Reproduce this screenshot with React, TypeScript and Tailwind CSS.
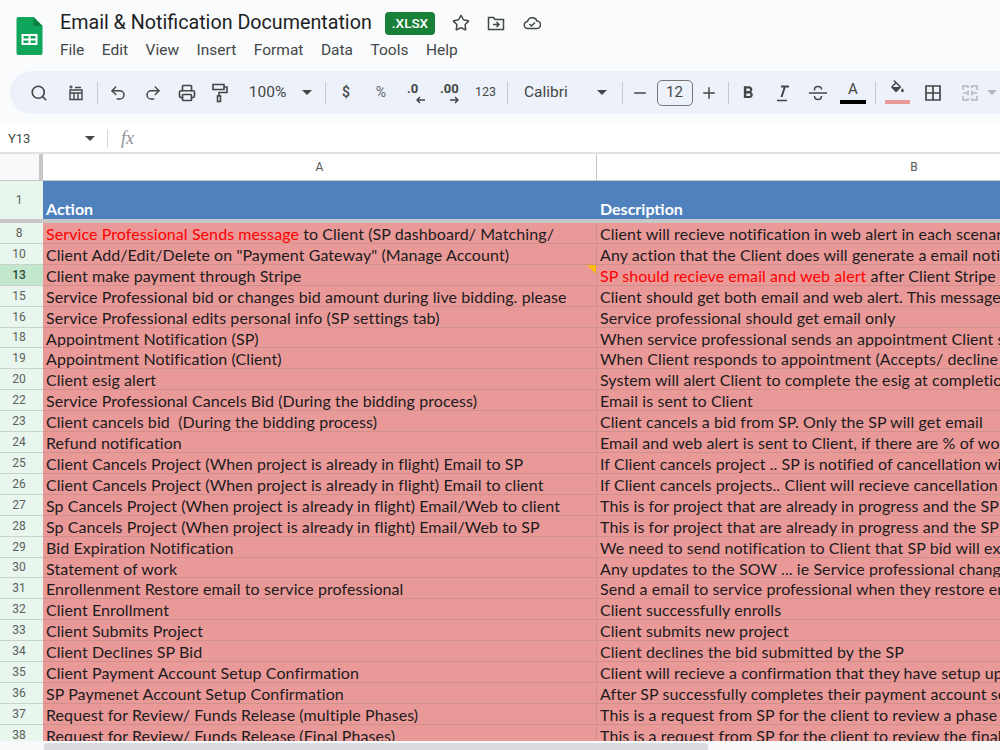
import { ReactNode } from 'react';
import { Star, Search, Undo2, Redo2, Printer, Minus, Plus } from 'lucide-react';

const MENU = ['File', 'Edit', 'View', 'Insert', 'Format', 'Data', 'Tools', 'Help'];

// rowNum, action, description; red prefix is split out where the sheet has it
const ROWS: { n: number; aRed?: string; a: string; bRed?: string; b: string; active?: boolean }[] = [
  { n: 8, aRed: 'Service Professional Sends message', a: ' to Client (SP dashboard/ Matching/', b: 'Client will recieve notification in web alert in each scenario' },
  { n: 10, a: 'Client Add/Edit/Delete on "Payment Gateway" (Manage Account)', b: 'Any action that the Client does will generate a email notification' },
  { n: 13, a: 'Client make payment through Stripe', bRed: 'SP should recieve email and web alert', b: ' after Client Stripe payment', active: true },
  { n: 15, a: 'Service Professional bid or changes bid amount during live bidding. please', b: 'Client should get both email and web alert. This message' },
  { n: 16, a: 'Service Professional edits personal info (SP settings tab)', b: 'Service professional should get email only' },
  { n: 18, a: 'Appointment Notification (SP)', b: 'When service professional sends an appointment Client should' },
  { n: 19, a: 'Appointment Notification (Client)', b: 'When Client responds to appointment (Accepts/ decline' },
  { n: 20, a: 'Client esig alert', b: 'System will alert Client to complete the esig at completion' },
  { n: 22, a: 'Service Professional Cancels Bid (During the bidding process)', b: 'Email is sent to Client' },
  { n: 23, a: 'Client cancels bid  (During the bidding process)', b: 'Client cancels a bid from SP. Only the SP will get email' },
  { n: 24, a: 'Refund notification', b: 'Email and web alert is sent to Client, if there are % of work' },
  { n: 25, a: 'Client Cancels Project (When project is already in flight) Email to SP', b: 'If Client cancels project .. SP is notified of cancellation with' },
  { n: 26, a: 'Client Cancels Project (When project is already in flight) Email to client', b: 'If Client cancels projects.. Client will recieve cancellation' },
  { n: 27, a: 'Sp Cancels Project (When project is already in flight) Email/Web to client', b: 'This is for project that are already in progress and the SP' },
  { n: 28, a: 'Sp Cancels Project (When project is already in flight) Email/Web to SP', b: 'This is for project that are already in progress and the SP' },
  { n: 29, a: 'Bid Expiration Notification', b: 'We need to send notification to Client that SP bid will expire' },
  { n: 30, a: 'Statement of work', b: 'Any updates to the SOW ... ie Service professional changes' },
  { n: 31, a: 'Enrollenment Restore email to service professional', b: 'Send a email to service professional when they restore enrollment' },
  { n: 32, a: 'Client Enrollment', b: 'Client successfully enrolls' },
  { n: 33, a: 'Client Submits Project', b: 'Client submits new project' },
  { n: 34, a: 'Client Declines SP Bid', b: 'Client declines the bid submitted by the SP' },
  { n: 35, a: 'Client Payment Account Setup Confirmation', b: 'Client will recieve a confirmation that they have setup up' },
  { n: 36, a: 'SP Paymenet Account Setup Confirmation', b: 'After SP successfully completes their payment account setup' },
  { n: 37, a: 'Request for Review/ Funds Release (multiple Phases)', b: 'This is a request from SP for the client to review a phase' },
  { n: 38, a: 'Request for Review/ Funds Release (Final Phases)', b: 'This is a request from SP for the client to review the final' },
];

function Divider() {
  return <div className="w-px h-[22px] bg-[#c7c9ce]" />;
}

function Arrow({ color = '#444746' }: { color?: string }) {
  return (
    <svg width="10" height="5" viewBox="0 0 10 5"><path d="M0 0h10L5 5z" fill={color} /></svg>
  );
}

// toolbar cell: fixed width, content centered
function Slot({ w, children }: { w: string; children?: ReactNode }) {
  return <div className={`${w} h-full shrink-0 flex items-center justify-center`}>{children}</div>;
}

function SheetsLogo() {
  return (
    <svg width="27" height="38" viewBox="0 0 26 38" className="shrink-0">
      <path d="M2 0h15l9 9v27a2 2 0 0 1-2 2H2a2 2 0 0 1-2-2V2a2 2 0 0 1 2-2z" fill="#0fa55a" />
      <path d="M17 0l9 9h-9z" fill="#0b8043" />
      <path d="M5 17h16v11H5z M7 19v2.500h5V19z M14 19v2.500h5V19z M7 23.500V26h5v-2.500z M14 23.500V26h5v-2.500z" fill="#fff" fillRule="evenodd" />
    </svg>
  );
}

function Toolbar() {
  const ic = 'w-[18px] h-[18px] text-[#444746] shrink-0';
  return (
    <div className="ml-[10px] h-[43px] mt-px bg-[#edf2fa] rounded-l-[22px] flex items-center pl-[10px] whitespace-nowrap overflow-hidden text-[#444746]" style={{ fontFamily: 'Roboto, sans-serif' }}>
      <Slot w="w-[37px]"><Search className={ic} strokeWidth={2.2} /></Slot>
      <Slot w="w-[38px]">
        <svg width="18" height="18" viewBox="0 0 18 18" fill="none" stroke="#444746" strokeWidth="1.400">
          <path d="M3 6h12v9.500H3zM3 9h12M7 9v6.500M11 9v6.500M4 1.500v3M2.500 3h3M8 3.500h6" />
        </svg>
      </Slot>
      <Slot w="w-[5px]"><Divider /></Slot>
      <Slot w="w-[36px]"><Undo2 className={ic} /></Slot>
      <Slot w="w-[33px]"><Redo2 className={ic} /></Slot>
      <Slot w="w-[36px]"><Printer className={ic} strokeWidth={2.200} /></Slot>
      <Slot w="w-[30px]">
        <svg width="18" height="20" viewBox="0 0 18 20" fill="none" stroke="#444746" strokeWidth="1.600">
          <path d="M2 1.500h11v5H2zM13 4h3v5.500H8V13" />
          <rect x="6.500" y="13" width="3" height="5.500" />
        </svg>
      </Slot>
      <Slot w="w-[65px]"><span className="text-[15.500px]">100%</span></Slot>
      <Slot w="w-[14px]"><Arrow /></Slot>
      <Slot w="w-[22px]"><Divider /></Slot>
      <Slot w="w-[20px]"><span className="text-[14px] font-medium">$</span></Slot>
      <Slot w="w-[50px]"><span className="text-[14px] text-[#5f6368]">%</span></Slot>
      <Slot w="w-[19px]">
        <span className="relative w-[19px] h-[24px] font-bold">
          <span className="absolute left-[1px] top-[1px] text-[13px] leading-[14px]">.0</span>
          <svg className="absolute right-0 bottom-[1px]" width="9" height="8" viewBox="0 0 9 8" fill="none" stroke="#444746" strokeWidth="1.500"><path d="M9 4H1M4 1L1 4l3 3" /></svg>
        </span>
      </Slot>
      <Slot w="w-[50px]">
        <span className="relative w-[20px] h-[24px] font-bold">
          <span className="absolute left-0 top-[1px] text-[13px] leading-[14px]">.00</span>
          <svg className="absolute right-[1px] bottom-[1px]" width="9" height="8" viewBox="0 0 9 8" fill="none" stroke="#444746" strokeWidth="1.500"><path d="M0 4h8M5 1l3 3-3 3" /></svg>
        </span>
      </Slot>
      <Slot w="w-[21px]"><span className="text-[12.500px]">123</span></Slot>
      <Slot w="w-[22px]"><Divider /></Slot>
      <div className="w-[73px] pl-[6px] shrink-0 text-[15.500px]">Calibri</div>
      <Slot w="w-[22px]"><Arrow /></Slot>
      <Slot w="w-[18px]"><Divider /></Slot>
      <Slot w="w-[18px]"><Minus className={ic} /></Slot>
      <Slot w="w-[51px]">
        <div className="w-[36px] h-[26px] border border-[#747775] rounded-[5px] flex items-center justify-center text-[15px]">12</div>
      </Slot>
      <Slot w="w-[18px]"><Plus className={ic} /></Slot>
      <Slot w="w-[20px]"><Divider /></Slot>
      <Slot w="w-[20px]">
        <svg width="20" height="20" viewBox="0 0 24 24" fill="#444746">
          <path d="M15.600 10.790c.97-.67 1.650-1.770 1.650-2.790 0-2.260-1.750-4-4-4H7v14h7.040c2.090 0 3.710-1.700 3.710-3.790 0-1.520-.86-2.820-2.150-3.420zM10 6.500h3c.83 0 1.500.67 1.500 1.500s-.67 1.500-1.500 1.500h-3v-3zm3.500 9H10v-3h3.500c.83 0 1.500.67 1.500 1.500s-.67 1.500-1.500 1.500z" />
        </svg>
      </Slot>
      <Slot w="w-[50px]">
        <svg width="18" height="20" viewBox="0 0 18 20" fill="none" stroke="#444746" strokeWidth="2">
          <path d="M7 3.500h8M11 3.500L7.500 14" />
          <path d="M3 17.500h10" strokeWidth="1.600" />
        </svg>
      </Slot>
      <Slot w="w-[20px]">
        <svg width="18" height="18" viewBox="0 0 18 18" fill="none" stroke="#444746" strokeWidth="1.500">
          <path d="M0 9h18M5.500 6.500V5.500C5.500 3.500 7 2.500 9 2.500s3.500 1 3.500 3M5.500 12c0 2 1.500 3.500 3.500 3.500s3.500-1.500 3.500-3.500" />
        </svg>
      </Slot>
      <div className="ml-[12px] -mt-[5px] w-[26px] h-[28px] flex flex-col items-center justify-end shrink-0">
        <span className="text-[15px] leading-none">A</span>
        <div className="w-[26px] h-[4.500px] bg-black mt-[3px]" />
      </div>
      <Slot w="w-[19px]"><Divider /></Slot>
      <div className="-mt-[5px] w-[25px] h-[28px] flex flex-col items-center justify-end shrink-0">
        <svg width="17" height="17" viewBox="0 0 24 24" fill="#444746" fillRule="evenodd">
          <path d="M16.560 8.940L7.620 0 6.210 1.410l2.380 2.380-5.150 5.150c-.59.59-.59 1.540 0 2.120l5.500 5.500c.29.29.68.44 1.060.44s.77-.15 1.060-.44l5.500-5.500c.59-.58.59-1.530 0-2.120zM5.210 10L10 5.210 14.790 10H5.210zM19 11.500s-2 2.170-2 3.500c0 1.100.9 2 2 2s2-.9 2-2c0-1.330-2-3.500-2-3.500z" />
        </svg>
        <div className="w-[25px] h-[4px] bg-[#ea9999] mt-[3px]" />
      </div>
      <Slot w="w-[46px]">
        <svg width="16" height="16" viewBox="0 0 16 16" fill="none" stroke="#444746" strokeWidth="1.700">
          <path d="M1 1h14v14H1zM8 1v14M1 8h14" />
        </svg>
      </Slot>
      <Slot w="w-[28px]">
        <svg width="18" height="18" viewBox="0 0 18 18" fill="none" stroke="#b4b7bc" strokeWidth="1.500">
          <path d="M2 6V2h5v2M16 6V2h-5v2M2 12v4h5v-2M16 12v4h-5v-2M2 9h5M11 9h5M7 6.500v5M11 6.500v5" />
        </svg>
      </Slot>
      <Slot w="w-[16px]"><Arrow color="#b4b7bc" /></Slot>
    </div>
  );
}

function SheetRow({ row }: { row: (typeof ROWS)[number] }) {
  return (
    <div className="flex h-[20.920px] shrink-0">
      <div className={`w-[43px] shrink-0 flex items-center justify-center pr-[5px] text-[12px] border-b border-[#c7d4cc] ${row.active ? 'bg-[#c3e7cd] font-medium text-[#2c4a35]' : 'bg-[#e8f6ed] text-[#5a5f5c]'}`} style={{ fontFamily: 'Roboto, sans-serif' }}>
        {row.n}
      </div>
      <div className="relative w-[554px] shrink-0 bg-[#ea9999] border-b border-r border-[#d0908c] pl-[3px] overflow-hidden whitespace-pre text-[16px] leading-[21px] tracking-[0.08px] text-[#1c1c1c]">
        {row.active && <span className="absolute right-0 top-0 w-0 h-0 border-t-[9px] border-l-[9px] border-t-[#fbbc04] border-l-transparent" />}
        {row.aRed && <span className="text-[#ff0000]">{row.aRed}</span>}
        {row.a}
      </div>
      <div className="w-[634px] shrink-0 bg-[#ea9999] border-b border-[#d0908c] pl-[3px] overflow-hidden whitespace-pre text-[16px] leading-[21px] tracking-[0.08px] text-[#1c1c1c]">
        {row.bRed && <span className="text-[#ff0000]">{row.bRed}</span>}
        {row.b}
      </div>
    </div>
  );
}

export default function App() {
  return (
    <div className="w-[1000px] h-[750px] overflow-hidden bg-white flex flex-col" style={{ fontFamily: 'Lato, sans-serif' }}>
      {/* title + toolbar */}
      <div className="h-[125px] shrink-0 bg-[#f9fbfd] flex flex-col">
        <div className="h-[70px] shrink-0 flex pl-[16px] pt-[17px] gap-[17px]" style={{ fontFamily: 'Roboto, sans-serif' }}>
          <SheetsLogo />
          <div className="flex flex-col -mt-[7px]">
            <div className="flex items-center h-[26px]">
              <span className="w-[325px] whitespace-nowrap text-[19.700px] text-[#1f1f1f]">Email &amp; Notification Documentation</span>
              <span className="h-[23px] w-[50px] rounded-[4px] bg-[#188038] text-white text-[13.500px] font-medium flex items-center justify-center">.XLSX</span>
              <Star className="ml-[17px] w-[18px] h-[18px] text-[#444746]" />
              <svg className="ml-[17px]" width="18" height="16" viewBox="0 0 18 16" fill="none" stroke="#444746" strokeWidth="1.500">
                <path d="M1.500 2.500h5l1.500 2h8.500v10h-15zM6 9.500h6M9.500 7l2.500 2.500-2.500 2.500" />
              </svg>
              <svg className="ml-[18px]" width="18" height="14" viewBox="0 0 18 14" fill="none" stroke="#444746" strokeWidth="1.500">
                <path d="M5 12.500a3.500 3.500 0 0 1-.5-7A5 5 0 0 1 14 5a3.500 3.500 0 0 1-.5 7.500zM6.500 8l2 2 3.500-3.500" />
              </svg>
            </div>
            <div className="flex gap-[17.500px] mt-[3px] text-[15.500px] text-[#444746] leading-[22px]">
              {MENU.map((m) => <span key={m}>{m}</span>)}
            </div>
          </div>
        </div>
        <Toolbar />
      </div>

      {/* formula bar */}
      <div className="h-[29px] shrink-0 flex items-center border-b-2 border-[#e1e3e1]" style={{ fontFamily: 'Roboto, sans-serif' }}>
        <span className="pl-[8px] w-[85px] text-[13px] text-[#444746]">Y13</span>
        <Arrow />
        <div className="ml-[12px] mr-[13px] w-px h-[18px] bg-[#d5d7da]" />
        <span className="text-[18px] font-medium italic text-[#8f9296]" style={{ fontFamily: '"Liberation Serif", serif' }}>fx</span>
      </div>

      {/* column letters */}
      <div className="h-[27px] shrink-0 flex border-b border-[#c4c7c5] text-[12px] text-[#555]" style={{ fontFamily: 'Roboto, sans-serif' }}>
        <div className="w-[43px] shrink-0 bg-[#f8f9fa] border-r-[4px] border-[#c7c7c7]" />
        <div className="w-[554px] shrink-0 flex items-center justify-center border-r border-[#c4c7c5]">A</div>
        <div className="w-[634px] shrink-0 flex items-center justify-center">B</div>
      </div>

      {/* frozen header row */}
      <div className="h-[38px] shrink-0 flex">
        <div className="w-[43px] shrink-0 bg-[#e8f6ed] flex items-center justify-center pr-[5px] text-[12px] text-[#5a5f5c]" style={{ fontFamily: 'Roboto, sans-serif' }}>1</div>
        <div className="w-[554px] shrink-0 bg-[#4f81bd] flex items-end pl-[3px] text-white font-bold text-[16px] leading-[20px]">Action</div>
        <div className="w-[634px] shrink-0 bg-[#4f81bd] flex items-end pl-[3px] text-white font-bold text-[16px] leading-[20px]">Description</div>
      </div>
      <div className="h-[4px] shrink-0 bg-[#c7c7c7]" />

      {/* body */}
      <div className="relative flex-1 overflow-hidden flex flex-col">
        {ROWS.map((row) => <SheetRow key={row.n} row={row} />)}
        <div className="absolute left-0 right-0 bottom-0 h-[9px] bg-[#f8f9fa]">
          <div className="absolute left-[44px] top-[2px] w-[664px] h-[7px] bg-[#dadce0] rounded-t-[4px]" />
        </div>
      </div>
    </div>
  );
}
